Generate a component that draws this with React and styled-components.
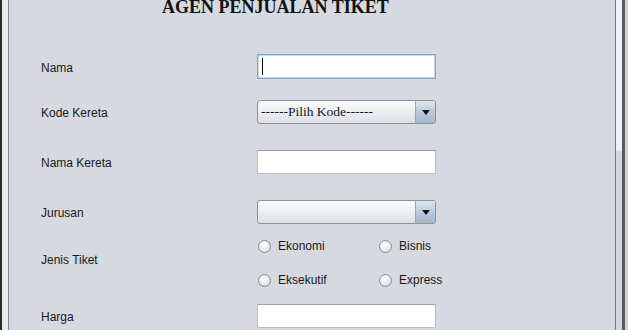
import styled, { createGlobalStyle } from "styled-components";

const Global = createGlobalStyle`
  html, body {
    margin: 0;
    padding: 0;
    background: #d6d9e0;
    overflow: hidden;
  }
`;

const Window = styled.div`
  display: flex;
  width: 628px;
  height: 330px;
  overflow: hidden;
`;

const LeftEdge = styled.div`
  width: 6px;
  border-left: 2px solid #2b2b2b;
  border-right: 1px solid #8a8c90;
  background: #e9ebee;
`;

const RightEdge = styled.div`
  width: 6px;
  border-left: 1px solid #7a7b7e;
  border-right: 3px solid #58595c;
  background: linear-gradient(#eef0f3 0, #eef0f3 150px, #d2d5dc 152px);
`;

const Outside = styled.div`
  width: 3px;
  background: #cfd2d8;
`;

const Panel = styled.div`
  flex: 1;
  display: flex;
  flex-direction: column;
  background: #d6d9e0;
  padding-left: 32px;
`;

const Title = styled.h1`
  margin: 0 0 0 121px;
  height: 20px;
  font-family: "Liberation Serif", "Times New Roman", serif;
  font-weight: bold;
  font-size: 18px;
  line-height: 15px;
  color: #111;
  white-space: nowrap;
`;

const Row = styled.div`
  display: flex;
  align-items: ${(p) => (p.$top ? "flex-start" : "center")};
  height: ${(p) => p.$h || 24}px;
  margin-top: ${(p) => p.$mt}px;
`;

const Label = styled.div`
  width: 216px;
  font-family: "Liberation Sans", Arial, sans-serif;
  font-size: 12px;
  color: #1a1a1a;
  padding-top: ${(p) => p.$pt || 2}px;
`;

const TextField = styled.div`
  position: relative;
  box-sizing: border-box;
  width: 179px;
  height: ${(p) => (p.$focus ? 25 : 24)}px;
  background: #fff;
  border: 1px solid ${(p) => (p.$focus ? "#7ea4cf" : "#b9bdc4")};
  border-top-color: ${(p) => (p.$focus ? "#7ea4cf" : "#9c9fa5")};
  box-shadow: ${(p) => (p.$focus ? "inset 0 0 0 1px #c5d6ea" : "none")};
`;

const Caret = styled.span`
  position: absolute;
  left: 4px;
  top: 3px;
  width: 1px;
  height: 17px;
  background: #000;
`;

const Combo = styled.div`
  box-sizing: border-box;
  width: 179px;
  height: 24px;
  display: flex;
  border: 1px solid #8c9098;
  border-radius: 3px;
  background: linear-gradient(#fafbfc, #eceef1 50%, #dcdfe4);
  overflow: hidden;
`;

const ComboText = styled.div`
  flex: 1;
  padding-left: 3px;
  font-family: "Liberation Serif", "Times New Roman", serif;
  font-size: 13.5px;
  line-height: 22px;
  color: #14162a;
  white-space: nowrap;
`;

const ComboButton = styled.div`
  width: 19px;
  display: flex;
  align-items: center;
  justify-content: center;
  border-left: 1px solid #9aa6b6;
  background: linear-gradient(#dfe6ee, #bccadb 50%, #a5b6ca);
`;

const Arrow = styled.span`
  width: 0;
  height: 0;
  border-left: 4px solid transparent;
  border-right: 4px solid transparent;
  border-top: 5px solid #111;
`;

const RadioGrid = styled.div`
  display: grid;
  grid-template-columns: 121px auto;
  grid-auto-rows: 20px;
  row-gap: 14px;
`;

const RadioItem = styled.div`
  display: flex;
  align-items: center;
  gap: 7px;
  font-family: "Liberation Sans", Arial, sans-serif;
  font-size: 12px;
  color: #1a1a1a;
`;

const Circle = styled.span`
  box-sizing: border-box;
  width: 13px;
  height: 13px;
  margin-left: 1px;
  border-radius: 50%;
  border: 1px solid #8a8c90;
  background: radial-gradient(circle at 40% 35%, #ffffff, #e6e8eb 60%, #c9ccd1);
`;

function Radio({ children }) {
  return (
    <RadioItem>
      <Circle />
      {children}
    </RadioItem>
  );
}

export default function App() {
  return (
    <>
      <Global />
      <Window>
        <LeftEdge />
        <Panel>
          <Title>AGEN PENJUALAN TIKET</Title>
          <Row $mt={34} $h={25}>
            <Label>Nama</Label>
            <TextField $focus>
              <Caret />
            </TextField>
          </Row>
          <Row $mt={21}>
            <Label>Kode Kereta</Label>
            <Combo>
              <ComboText>------Pilih Kode------</ComboText>
              <ComboButton>
                <Arrow />
              </ComboButton>
            </Combo>
          </Row>
          <Row $mt={26}>
            <Label>Nama Kereta</Label>
            <TextField />
          </Row>
          <Row $mt={26}>
            <Label>Jurusan</Label>
            <Combo>
              <ComboText />
              <ComboButton>
                <Arrow />
              </ComboButton>
            </Combo>
          </Row>
          <Row $mt={12} $h={54} $top>
            <Label $pt={17}>Jenis Tiket</Label>
            <RadioGrid>
              <Radio>Ekonomi</Radio>
              <Radio>Bisnis</Radio>
              <Radio>Eksekutif</Radio>
              <Radio>Express</Radio>
            </RadioGrid>
          </Row>
          <Row $mt={14}>
            <Label>Harga</Label>
            <TextField />
          </Row>
        </Panel>
        <RightEdge />
        <Outside />
      </Window>
    </>
  );
}
